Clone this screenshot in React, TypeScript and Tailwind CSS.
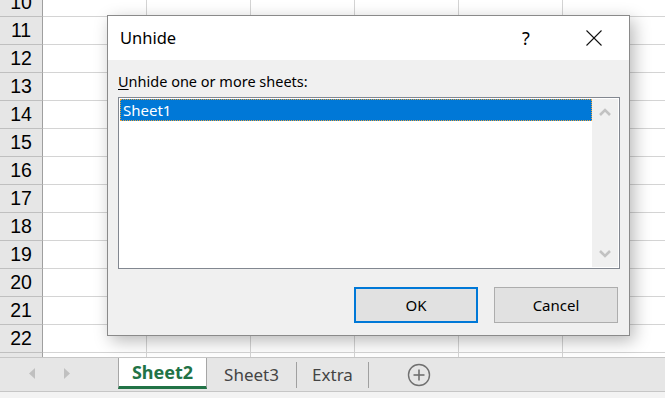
const rows = [10, 11, 12, 13, 14, 15, 16, 17, 18, 19, 20, 21, 22, 23];
const cols = [0, 1, 2, 3, 4, 5];

function Grid() {
  return (
    <div className="h-[357px] overflow-hidden bg-white">
      <div className="-mt-[11px]">
        {rows.map((r) => (
          <div key={r} className="flex h-[28px]">
            <div className="w-[43px] shrink-0 border-r border-b border-r-[#9f9f9f] border-b-[#bfbfbf] bg-[#e6e6e6] flex items-center justify-center font-['Liberation_Sans',sans-serif] text-[19.5px] text-black">
              {r < 23 ? r : ""}
            </div>
            {cols.map((c) => (
              <div key={c} className="w-[104px] shrink-0 border-r border-b border-[#d4d4d4]" />
            ))}
          </div>
        ))}
      </div>
    </div>
  );
}

function TabBar() {
  return (
    <div className="h-[35px] border-t border-b border-[#c6c6c6] bg-[#e6e6e6] flex items-start font-['Segoe_UI','Noto_Sans',sans-serif]">
      <div className="w-[118px] h-full flex items-center">
        <svg width="118" height="33" viewBox="0 0 118 33">
          <polygon points="35,10 35,21 29,15.5" fill="#c0c0c0" />
          <polygon points="64,10 64,21 70,15.5" fill="#c0c0c0" />
        </svg>
      </div>
      <div className="h-[31px] w-[89px] bg-white border-l border-r border-[#a6a6a6] border-b-[3px] border-b-[#217346] flex items-center justify-center text-[18px] font-bold text-[#217346]">
        Sheet2
      </div>
      <div className="h-full flex items-center">
        <div className="w-[89px] text-center text-[17px] text-[#444444]">Sheet3</div>
        <div className="w-px h-[26px] bg-[#a0a0a0]" />
        <div className="w-[71px] text-center text-[17px] text-[#444444]">Extra</div>
        <div className="w-px h-[26px] bg-[#a0a0a0]" />
        <div className="ml-[38px]">
          <svg width="24" height="24" viewBox="0 0 24 24">
            <circle cx="12" cy="12" r="10.5" fill="none" stroke="#707070" strokeWidth="1.4" />
            <line x1="12" y1="6.5" x2="12" y2="17.5" stroke="#707070" strokeWidth="1.6" />
            <line x1="6.5" y1="12" x2="17.5" y2="12" stroke="#707070" strokeWidth="1.6" />
          </svg>
        </div>
      </div>
    </div>
  );
}

function Dialog() {
  return (
    <div className="absolute left-[107px] top-[15px] w-[523px] h-[321px] border border-[#8a8a8a] bg-[#f0f0f0] shadow-[4px_5px_16px_rgba(0,0,0,0.28)] font-['Segoe_UI','Noto_Sans',sans-serif] text-black">
      <div className="h-[44px] bg-white flex items-center">
        <div className="pl-[12px] text-[16.5px] flex-1">Unhide</div>
        <div className="w-[20px] text-center text-[18px] mr-[50px]">?</div>
        <svg width="16" height="16" viewBox="0 0 16 16" className="mr-[27px]">
          <line x1="0.5" y1="0.5" x2="15.5" y2="15.5" stroke="#111" strokeWidth="1.1" />
          <line x1="15.5" y1="0.5" x2="0.5" y2="15.5" stroke="#111" strokeWidth="1.1" />
        </svg>
      </div>
      <div className="pt-[11px] pl-[10px] pr-[9px]">
        <div className="h-[20px] leading-[20px] text-[14.5px]">
          <span className="underline underline-offset-2">U</span>nhide one or more sheets:
        </div>
        <div className="mt-[6px] h-[172px] border border-[#828790] bg-white p-px flex">
          <div className="flex-1">
            <div className="h-[22px] bg-[#0078d7] outline outline-1 outline-dotted outline-[#e8a23c] -outline-offset-1 text-white text-[15px] leading-[22px] pl-[3px]">
              Sheet1
            </div>
          </div>
          <div className="w-[26px] bg-[#f0f0f0] flex flex-col items-center justify-between py-[9px]">
            <svg width="12" height="8" viewBox="0 0 12 8">
              <polyline points="1,7 6,2 11,7" fill="none" stroke="#c2c2c2" strokeWidth="2.6" />
            </svg>
            <svg width="12" height="8" viewBox="0 0 12 8">
              <polyline points="1,1 6,6 11,1" fill="none" stroke="#c2c2c2" strokeWidth="2.6" />
            </svg>
          </div>
        </div>
        <div className="mt-[18px] flex justify-end gap-[16px] pr-[2px]">
          <button className="w-[124px] h-[36px] border-2 border-[#0078d7] bg-[#e1e1e1] text-[15px]">OK</button>
          <button className="w-[124px] h-[36px] border border-[#adadad] bg-[#e1e1e1] text-[15px]">Cancel</button>
        </div>
      </div>
    </div>
  );
}

export default function App() {
  return (
    <div className="relative w-[665px] h-[398px] overflow-hidden bg-white">
      <Grid />
      <TabBar />
      <div className="h-[6px] bg-[#f3f3f3]" />
      <Dialog />
    </div>
  );
}
